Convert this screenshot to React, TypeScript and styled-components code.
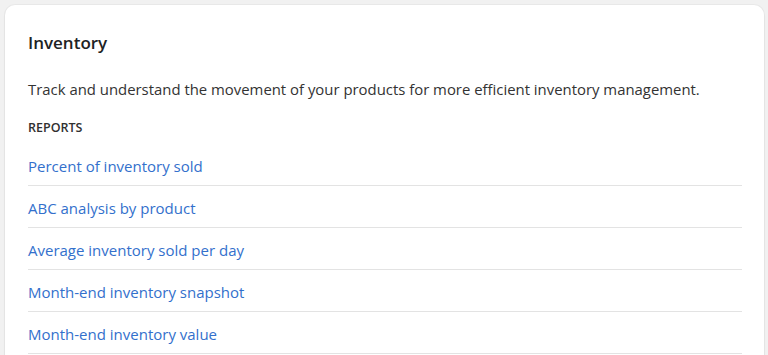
import React from "react";
import styled, { createGlobalStyle } from "styled-components";

const reports = [
  "Percent of inventory sold",
  "ABC analysis by product",
  "Average inventory sold per day",
  "Month-end inventory snapshot",
  "Month-end inventory value",
];

function App() {
  return (
    <>
      <GlobalStyle />
      <Page>
        <Card>
          <Title>Inventory</Title>
          <Description>
            Track and understand the movement of your products for more efficient inventory management.
          </Description>
          <SectionLabel>Reports</SectionLabel>
          <ReportList>
            {reports.map((name) => (
              <ReportItem key={name}>
                <ReportLink href="#">{name}</ReportLink>
              </ReportItem>
            ))}
          </ReportList>
        </Card>
      </Page>
    </>
  );
}

export default App;

const GlobalStyle = createGlobalStyle`
  body {
    margin: 0;
    background: #f1f1f1;
    font-family: "Open Sans", "Noto Sans", "Liberation Sans", sans-serif;
  }
`;

const Page = styled.div`
  padding: 5px 4px 0 5px;
  height: 355px;
  box-sizing: border-box;
  overflow: hidden;
`;

const Card = styled.div`
  background: #ffffff;
  border-radius: 10px;
  box-shadow: 0 0 0 1px rgba(0, 0, 0, 0.03), 0 1px 2px rgba(0, 0, 0, 0.08);
  padding: 28px 22px 0 23px;
  height: 400px;
`;

const Title = styled.h2`
  margin: 0;
  font-size: 17px;
  line-height: 20px;
  font-weight: 600;
  color: #202223;
`;

const Description = styled.p`
  margin: 26px 0 0;
  font-size: 14.9px;
  line-height: 20px;
  color: #333333;
`;

const SectionLabel = styled.div`
  margin-top: 20px;
  font-size: 12.5px;
  line-height: 18px;
  font-weight: 600;
  text-transform: uppercase;
  color: #303030;
`;

const ReportList = styled.ul`
  list-style: none;
  margin: 7px 0 0;
  padding: 0;
`;

const ReportItem = styled.li`
  border-bottom: 1px solid #e3e3e3;
  padding: 12px 0 9px;
  line-height: 20px;
`;

const ReportLink = styled.a`
  font-size: 15px;
  line-height: 20px;
  color: #3370cc;
  text-decoration: none;
`;
